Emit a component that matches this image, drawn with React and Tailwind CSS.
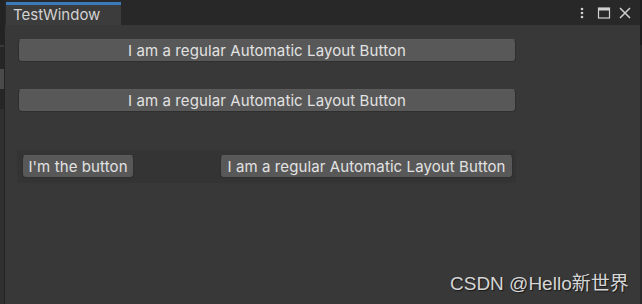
export default function App() {
  const btn =
    "h-[23px] rounded-[4px] bg-[#585858] border border-[#2f2f2f] border-t-[#5c5c5c] text-[15px] tracking-[0.1px] text-[#e2e2e2] flex items-center justify-center leading-none";
  return (
    <div
      className="w-[642px] h-[304px] bg-[#282828] flex relative overflow-hidden"
      style={{ fontFamily: "Inter, 'Noto Sans', sans-serif" }}
    >
      <div className="w-[4px] h-full flex flex-col bg-[#2e2e2e]">
        <div className="h-[45px] bg-[#232323]" />
        <div className="h-[2px] bg-[#3a3a3a]" />
        <div className="h-[22px] bg-[#262626]" />
        <div className="h-[20px] bg-[#4a4a4a]" />
        <div className="h-[20px] bg-[#262626]" />
        <div className="flex-1 bg-[#303030]" />
      </div>
      <div className="flex-1 flex flex-col border-l border-[#242424]">
        <div className="h-[25px] flex items-end bg-[#282828] relative">
          <div className="ml-[1px] w-[115px] h-[23px] bg-[#3c3c3c] border-t-[3px] border-[#3a79bb] flex items-center pl-[7px] text-[15px] text-[#d2d2d2]">
            TestWindow
          </div>
          <div className="ml-auto mr-[8px] h-full flex items-center text-[#cfcfcf]">
            <svg width="6" height="14" viewBox="0 0 6 14">
              <circle cx="3" cy="3" r="1.3" fill="#d0d0d0" />
              <circle cx="3" cy="7" r="1.3" fill="#d0d0d0" />
              <circle cx="3" cy="11" r="1.3" fill="#d0d0d0" />
            </svg>
            <svg width="14" height="14" viewBox="0 0 14 14" className="ml-[12px]">
              <rect x="1.5" y="2" width="11" height="10" fill="none" stroke="#d0d0d0" strokeWidth="1.2" />
              <rect x="1.5" y="2" width="11" height="2.5" fill="#d0d0d0" />
            </svg>
            <svg width="14" height="14" viewBox="0 0 14 14" className="ml-[7px]">
              <path d="M2 2 L12 12 M12 2 L2 12" stroke="#d0d0d0" strokeWidth="1.5" />
            </svg>
          </div>
        </div>
        <div className="flex-1 bg-[#383838] pl-[13px] pt-[14px]">
          <div className={`${btn} w-[498px]`}>I am a regular Automatic Layout Button</div>
          <div className={`${btn} w-[498px] mt-[27px]`}>I am a regular Automatic Layout Button</div>
          <div className="mt-[38px] w-[499px] -ml-[1px] h-[33px] bg-[#343434] flex items-center pl-[5px] pr-[3px] justify-between">
            <div className={`${btn} w-[112px]`}>I'm the button</div>
            <div className={`${btn} w-[293px]`}>I am a regular Automatic Layout Button</div>
          </div>
        </div>
      </div>
      <div className="w-[2px] h-full flex flex-col bg-[#2a2a2a]">
        <div className="h-[45px] bg-[#1e1e1e]" />
      </div>
      <div
        className="absolute left-[450px] top-[270px] text-[19px] text-[#d6d6d6]"
        style={{
          fontFamily: "'Liberation Sans', 'Noto Sans CJK SC', sans-serif",
          textShadow: "1px 1px 1px rgba(0,0,0,0.6)",
        }}
      >
        CSDN @Hello新世界
      </div>
    </div>
  );
}
